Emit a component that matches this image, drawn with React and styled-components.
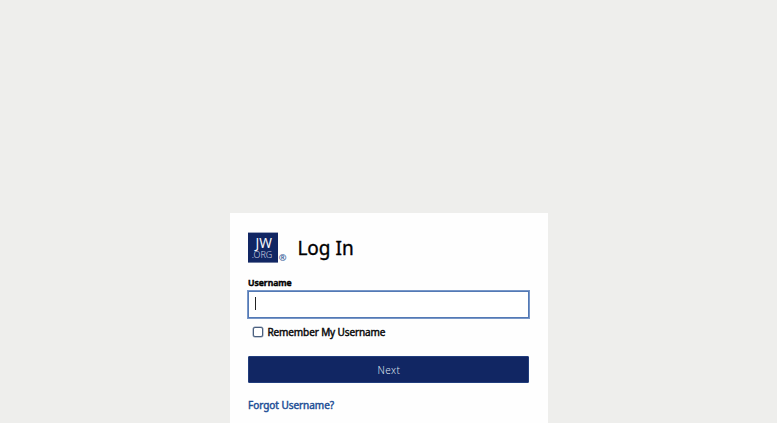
import React, { useState } from "react";
import styled, { createGlobalStyle } from "styled-components";

const GlobalStyle = createGlobalStyle`
    * {
        box-sizing: border-box;
    }

    body {
        margin: 0;
        background: #eeeeec;
        font-family: "Noto Sans", "Open Sans", sans-serif;
        color: #0b0b0b;
        overflow: hidden;
    }
`;

const Page = styled.main`
    height: 423px;
    padding: 213px 0 0;
    display: flex;
    justify-content: center;
    overflow: hidden;
`;

const Card = styled.section`
    width: 318px;
    height: 240px;
    flex-shrink: 0;
    padding: 20px 18.5px 0;
    background: #fefefe;
`;

const Header = styled.header`
    display: flex;
    height: 30px;
    align-items: center;
`;

const Logo = styled.svg`
    display: block;
    width: 40px;
    height: 30px;
    margin-right: 9.4px;
    flex-shrink: 0;
    overflow: visible;
    font-family: "Noto Sans", sans-serif;
`;

const Title = styled.h1`
    margin: 0;
    font-size: 19px;
    line-height: 30px;
    font-weight: 400;
    -webkit-text-stroke: 0.35px #000;
    color: #000;
`;

const Form = styled.form`
    display: flex;
    flex-direction: column;
`;

const Label = styled.label`
    margin-top: 13px;
    font-size: 8.7px;
    line-height: 14px;
    font-weight: 600;
    -webkit-text-stroke: 0.5px #000;
    color: #000;
`;

const Input = styled.input`
    width: 281px;
    height: 27px;
    margin: 1px 0 0;
    padding: 0 6px;
    border: 1px solid #5379b5;
    border-radius: 0;
    outline: none;
    box-shadow: 0 0 0 1px #7897c8;
    background: #fff;
    font: 400 10px "Noto Sans", sans-serif;
    caret-color: transparent;
`;

const InputWrapper = styled.div`
    position: relative;
    display: flex;
`;

const Caret = styled.span`
    position: absolute;
    left: 7px;
    top: 7px;
    width: 1px;
    height: 13px;
    background: #222;
`;

const RememberRow = styled.label`
    display: flex;
    align-items: center;
    height: 14px;
    margin: 7px 0 0 5px;
    font-size: 10px;
    font-weight: 400;
    letter-spacing: -0.12px;
    -webkit-text-stroke: 0.45px #0b0b0b;
`;

const Checkbox = styled.input`
    appearance: none;
    width: 10px;
    height: 10px;
    margin: 0 4.5px 0 0;
    border: 1.5px solid #4a5f7e;
    border-radius: 2px;
    background: #fff;
    box-shadow: 0 0 0 0.5px #8796ad;

    &:checked {
        background: #112663;
    }
`;

const NextButton = styled.button`
    width: 281px;
    height: 27px;
    margin-top: 17px;
    padding: 0 0 0 1px;
    border: 1px solid #213d7c;
    border-radius: 1px;
    background: #112663;
    color: #dfe4ef;
    font: 300 10px "Noto Sans", sans-serif;
    letter-spacing: 0.5px;
`;

const ForgotLink = styled.a`
    align-self: flex-start;
    margin-top: 15px;
    font-size: 10px;
    line-height: 14px;
    font-weight: 400;
    letter-spacing: -0.04px;
    -webkit-text-stroke: 0.45px #234f96;
    color: #234f96;
    text-decoration: none;
`;

function JwLogo() {
    return (
        <Logo viewBox="0 0 40 30" role="img" aria-label="JW.ORG">
            <rect y="-0.4" width="30" height="30" fill="#112663" />
            <g transform="translate(7.4 14.9) scale(0.95 1)">
                <text fontSize="14.4" fill="#f4f6fa">JW</text>
            </g>
            <g transform="translate(3.8 24.6) scale(0.92 1)">
                <text fontSize="9.8" fontWeight="300" fill="#d3d9e7">.ORG</text>
            </g>
            <text x="34.6" y="28" fontSize="9.4" fontWeight="700" fill="#2f5796" textAnchor="middle">®</text>
        </Logo>
    );
}

export default function App() {
    const [userName, setUserName] = useState("");
    const [remember, setRemember] = useState(false);

    return (
        <Page>
            <GlobalStyle />
            <Card>
                <Header>
                    <JwLogo />
                    <Title>Log In</Title>
                </Header>
                <Form onSubmit={(e) => e.preventDefault()}>
                    <Label htmlFor="username">Username</Label>
                    <InputWrapper>
                        <Input
                            id="username"
                            value={userName}
                            onChange={(e) => setUserName(e.target.value)}
                            autoComplete="username"
                        />
                        {!userName && <Caret />}
                    </InputWrapper>
                    <RememberRow>
                        <Checkbox
                            type="checkbox"
                            checked={remember}
                            onChange={(e) => setRemember(e.target.checked)}
                        />
                        Remember My Username
                    </RememberRow>
                    <NextButton type="submit">Next</NextButton>
                    <ForgotLink href="#forgot">Forgot Username?</ForgotLink>
                </Form>
            </Card>
        </Page>
    );
}
